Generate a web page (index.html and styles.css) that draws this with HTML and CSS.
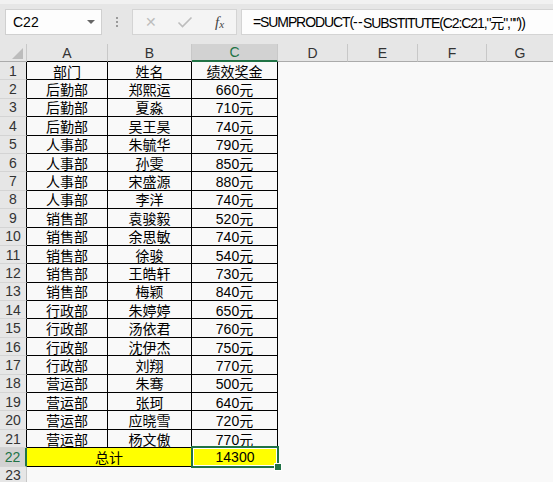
FILE: index.html
```
<!DOCTYPE html>
<html lang="zh-CN">
<head>
    <meta charset="UTF-8">
    <title>绩效奖金</title>
    <link rel="stylesheet" href="styles.css">
</head>
<body>
    <div class="toolbar">
        <div class="name-box">
            <span>C22</span>
            <span class="caret"></span>
        </div>
        <div class="grip"><i></i><i></i><i></i></div>
        <div class="fx-box">
            <span class="btn cancel">&#x2715;</span>
            <svg class="btn check" width="16" height="12" viewBox="0 0 16 12"><path d="M1.5 6.5 L5.5 10.5 L14.5 1.5" fill="none" stroke="#bdbdbd" stroke-width="1.6"/></svg>
            <span class="fx"><i>f</i><sub>x</sub></span>
        </div>
        <div class="formula">=SUMPRODUCT(<span class="dash">--</span>SUBSTITUTE(C2:C21,"元",""))</div>
    </div>

    <div class="sheet" id="sheet">
        <div class="corner"><span></span></div>
        <div class="col-head dark">A</div>
        <div class="col-head dark">B</div>
        <div class="col-head active">C</div>
        <div class="col-head">D</div>
        <div class="col-head">E</div>
        <div class="col-head">F</div>
        <div class="col-head last">G</div>
    </div>

    <script>
        const rows = [
            ['部门', '姓名', '绩效奖金'],
            ['后勤部', '郑熙运', '660元'],
            ['后勤部', '夏淼', '710元'],
            ['后勤部', '吴王昊', '740元'],
            ['人事部', '朱毓华', '790元'],
            ['人事部', '孙雯', '850元'],
            ['人事部', '宋盛源', '880元'],
            ['人事部', '李洋', '740元'],
            ['销售部', '袁骏毅', '520元'],
            ['销售部', '余思敏', '740元'],
            ['销售部', '徐骏', '540元'],
            ['销售部', '王皓轩', '730元'],
            ['销售部', '梅颖', '840元'],
            ['行政部', '朱婷婷', '650元'],
            ['行政部', '汤依君', '760元'],
            ['行政部', '沈伊杰', '750元'],
            ['行政部', '刘翔', '770元'],
            ['营运部', '朱骞', '500元'],
            ['营运部', '张珂', '640元'],
            ['营运部', '应晓雪', '720元'],
            ['营运部', '杨文傲', '770元']
        ];

        const sheet = document.getElementById('sheet');

        function cell(cls, text) {
            const div = document.createElement('div');
            div.className = cls;
            if (text) div.textContent = text;
            sheet.appendChild(div);
            return div;
        }

        function emptyCells() {
            for (let i = 0; i < 4; i++) cell('cell');
        }

        rows.forEach((row, i) => {
            cell('row-head bordered', String(i + 1));
            row.forEach(value => cell('cell data', value));
            emptyCells();
        });

        // total row
        cell('row-head active', '22');
        cell('cell data total merged', '总计');
        const sum = cell('cell data total selected', '14300');
        sum.appendChild(document.createElement('span')).className = 'handle';
        emptyCells();

        cell('row-head', '23');
        cell('cell'); cell('cell'); cell('cell');
        emptyCells();
    </script>
</body>
</html>
```

FILE: styles.css
```
body {
    margin: 0;
    width: 553px;
    height: 482px;
    overflow: hidden;
    background-color: #f9f9f9;
    font-family: "Liberation Sans", "Noto Sans CJK SC", sans-serif;
    color: #000;
}

.toolbar {
    height: 44px;
    box-sizing: border-box;
    padding: 5px 0 9px 5px;
    display: flex;
    align-items: stretch;
    background-color: #e6e6e6;
    border-top: 4px solid #f1f1f1;
}

.name-box {
    width: 97px;
    box-sizing: border-box;
    background: #fdfdfd;
    border: 1px solid #d0d0d0;
    display: flex;
    align-items: center;
    justify-content: space-between;
    padding: 0 6px 0 7px;
    font-size: 14px;
}

.caret {
    width: 0;
    height: 0;
    border-left: 4px solid transparent;
    border-right: 4px solid transparent;
    border-top: 4px solid #666;
}

.grip {
    width: 30px;
    display: flex;
    flex-direction: column;
    align-items: center;
    justify-content: center;
    gap: 2px;
}

.grip i {
    width: 2px;
    height: 2px;
    background: #9a9a9a;
}

.fx-box {
    width: 105px;
    box-sizing: border-box;
    background: #f4f4f4;
    border: 1px solid #d4d4d4;
    display: flex;
    align-items: center;
    padding: 0 0 0 12px;
    gap: 20px;
}

.cancel {
    font-size: 14px;
    color: #bdbdbd;
}

.fx {
    font-family: "Liberation Serif", serif;
    font-size: 15px;
    color: #444;
    margin-left: 2px;
}

.fx sub {
    font-size: 11px;
    font-style: italic;
    vertical-align: -1px;
}

.formula {
    flex: 1;
    margin-left: 4px;
    background: #fdfdfd;
    border: 1px solid #d4d4d4;
    border-right: none;
    display: flex;
    align-items: center;
    padding-left: 11px;
    font-size: 14px;
    letter-spacing: -1.1px;
    white-space: nowrap;
    overflow: hidden;
}

.formula .dash {
    letter-spacing: 0.4px;
}

.sheet {
    display: grid;
    grid-template-columns: 27px 81px 84px 86px 70px 70px 69px 66px;
    grid-template-rows: 18px;
    grid-auto-rows: 18.4px;
}

.corner {
    background: #e6e6e6;
    border-right: 1px solid #c8c8c8;
    border-bottom: 1px solid #ababab;
    position: relative;
}

.corner span {
    position: absolute;
    right: 3px;
    bottom: 2px;
    width: 0;
    height: 0;
    border-left: 11px solid transparent;
    border-bottom: 11px solid #bcbcbc;
}

.col-head {
    box-sizing: border-box;
    background: #e6e6e6;
    border-right: 1px solid #c8c8c8;
    border-bottom: 1px solid #ababab;
    display: flex;
    align-items: center;
    justify-content: center;
    font-size: 14px;
    color: #333;
}

.col-head.dark {
    border-bottom-color: #000;
}

.col-head.active {
    background: #d2d2d2;
    color: #217346;
    border-bottom: 2px solid #217346;
}

.col-head.last {
    border-right: none;
}

.row-head {
    box-sizing: border-box;
    background: #e6e6e6;
    border-right: 1px solid #c8c8c8;
    border-bottom: 1px solid #d4d4d4;
    display: flex;
    align-items: center;
    justify-content: center;
    font-size: 14px;
    color: #333;
}

.row-head.bordered {
    border-right-color: #000;
}

.row-head.active {
    background: #d2d2d2;
    color: #217346;
    border-right: 2px solid #217346;
}

.cell {
    box-sizing: border-box;
    display: flex;
    align-items: center;
    justify-content: center;
    font-size: 14px;
}

.data {
    border-right: 1px solid #000;
    border-bottom: 1px solid #000;
}

.total {
    background: #ffff00;
}

.merged {
    grid-column: span 2;
}

.selected {
    position: relative;
    border: none;
}

.selected::after {
    content: "";
    position: absolute;
    left: -1px;
    top: -2px;
    right: -1px;
    bottom: -1px;
    border: 2px solid #217346;
    box-shadow: inset 0 0 0 1px #fff;
}

.handle {
    position: absolute;
    right: -4px;
    bottom: -4px;
    width: 6px;
    height: 6px;
    background: #217346;
    border: 1px solid #fff;
    z-index: 1;
}
```
